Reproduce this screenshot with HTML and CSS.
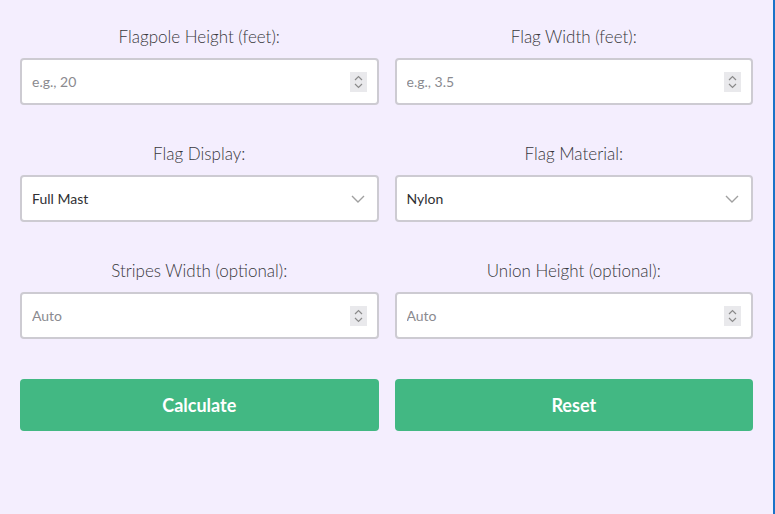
FILE: index.html
```html
<!DOCTYPE html>
<html>
<head>
<meta charset="utf-8">
<link rel="stylesheet" href="styles.css">
</head>
<body>
<div class="page">
  <form class="grid">
    <div class="group">
      <label class="label">Flagpole Height (feet):</label>
      <div class="box">
        <input class="field" type="text" placeholder="e.g., 20">
        <span class="spin"><svg width="17" height="20" viewBox="0 0 17 20"><path d="M5 8 L8.5 4.5 L12 8" fill="none" stroke="#8a8a8a" stroke-width="1.2"/><path d="M5 12 L8.5 15.5 L12 12" fill="none" stroke="#8a8a8a" stroke-width="1.2"/></svg></span>
      </div>
    </div>
    <div class="group">
      <label class="label">Flag Width (feet):</label>
      <div class="box">
        <input class="field" type="text" placeholder="e.g., 3.5">
        <span class="spin"><svg width="17" height="20" viewBox="0 0 17 20"><path d="M5 8 L8.5 4.5 L12 8" fill="none" stroke="#8a8a8a" stroke-width="1.2"/><path d="M5 12 L8.5 15.5 L12 12" fill="none" stroke="#8a8a8a" stroke-width="1.2"/></svg></span>
      </div>
    </div>
    <div class="group">
      <label class="label">Flag Display:</label>
      <div class="box">
        <span class="value">Full Mast</span>
        <span class="chev"><svg width="14" height="10" viewBox="0 0 14 10"><path d="M1 2 L7 8 L13 2" fill="none" stroke="#a0a0a0" stroke-width="1.4"/></svg></span>
      </div>
    </div>
    <div class="group">
      <label class="label">Flag Material:</label>
      <div class="box">
        <span class="value">Nylon</span>
        <span class="chev"><svg width="14" height="10" viewBox="0 0 14 10"><path d="M1 2 L7 8 L13 2" fill="none" stroke="#a0a0a0" stroke-width="1.4"/></svg></span>
      </div>
    </div>
    <div class="group">
      <label class="label">Stripes Width (optional):</label>
      <div class="box">
        <input class="field" type="text" placeholder="Auto">
        <span class="spin"><svg width="17" height="20" viewBox="0 0 17 20"><path d="M5 8 L8.5 4.5 L12 8" fill="none" stroke="#8a8a8a" stroke-width="1.2"/><path d="M5 12 L8.5 15.5 L12 12" fill="none" stroke="#8a8a8a" stroke-width="1.2"/></svg></span>
      </div>
    </div>
    <div class="group">
      <label class="label">Union Height (optional):</label>
      <div class="box">
        <input class="field" type="text" placeholder="Auto">
        <span class="spin"><svg width="17" height="20" viewBox="0 0 17 20"><path d="M5 8 L8.5 4.5 L12 8" fill="none" stroke="#8a8a8a" stroke-width="1.2"/><path d="M5 12 L8.5 15.5 L12 12" fill="none" stroke="#8a8a8a" stroke-width="1.2"/></svg></span>
      </div>
    </div>
    <button type="button" class="btn">Calculate</button>
    <button type="button" class="btn">Reset</button>
  </form>
</div>
</body>
</html>
```
FILE: styles.css
```css
html, body {
  margin: 0;
  padding: 0;
}
body {
  background: #f4eefe;
  font-family: Lato, "Open Sans", sans-serif;
  width: 775px;
  height: 514px;
  overflow: hidden;
}
.page {
  box-sizing: border-box;
  width: 775px;
  height: 514px;
  padding: 26px 20px 0 20px;
  border-right: 2px solid #1a73c8;
}
.grid {
  display: grid;
  grid-template-columns: 1fr 1fr;
  column-gap: 16px;
  row-gap: 38px;
  margin: 0;
}
.group {
  display: flex;
  flex-direction: column;
  align-items: stretch;
}
.label {
  display: block;
  text-align: center;
  font-size: 17px;
  font-weight: 300;
  color: #38383c;
  line-height: 22px;
  margin-bottom: 10px;
}
.box {
  box-sizing: border-box;
  height: 47px;
  background: #ffffff;
  border: 2px solid #cdcbd2;
  border-radius: 4px;
  display: flex;
  align-items: center;
  padding: 0 10px 0 10px;
}
.field {
  flex: 1;
  border: none;
  outline: none;
  background: transparent;
  font-family: Lato, "Open Sans", sans-serif;
  font-size: 14px;
  color: #333;
  padding: 0;
  min-width: 0;
}
.field::placeholder {
  color: #8a8a8f;
}
.spin {
  display: flex;
  width: 17px;
  height: 20px;
  background: #e9e9ec;
}
.value {
  flex: 1;
  font-size: 14px;
  color: #2f2f33;
}
.chev {
  display: flex;
  margin-right: 2px;
}
.btn {
  margin-top: 2px;
  height: 52px;
  border: none;
  border-radius: 4px;
  background: #42b883;
  color: #ffffff;
  font-family: Lato, "Open Sans", sans-serif;
  font-weight: 700;
  font-size: 18px;
  cursor: pointer;
}
```
